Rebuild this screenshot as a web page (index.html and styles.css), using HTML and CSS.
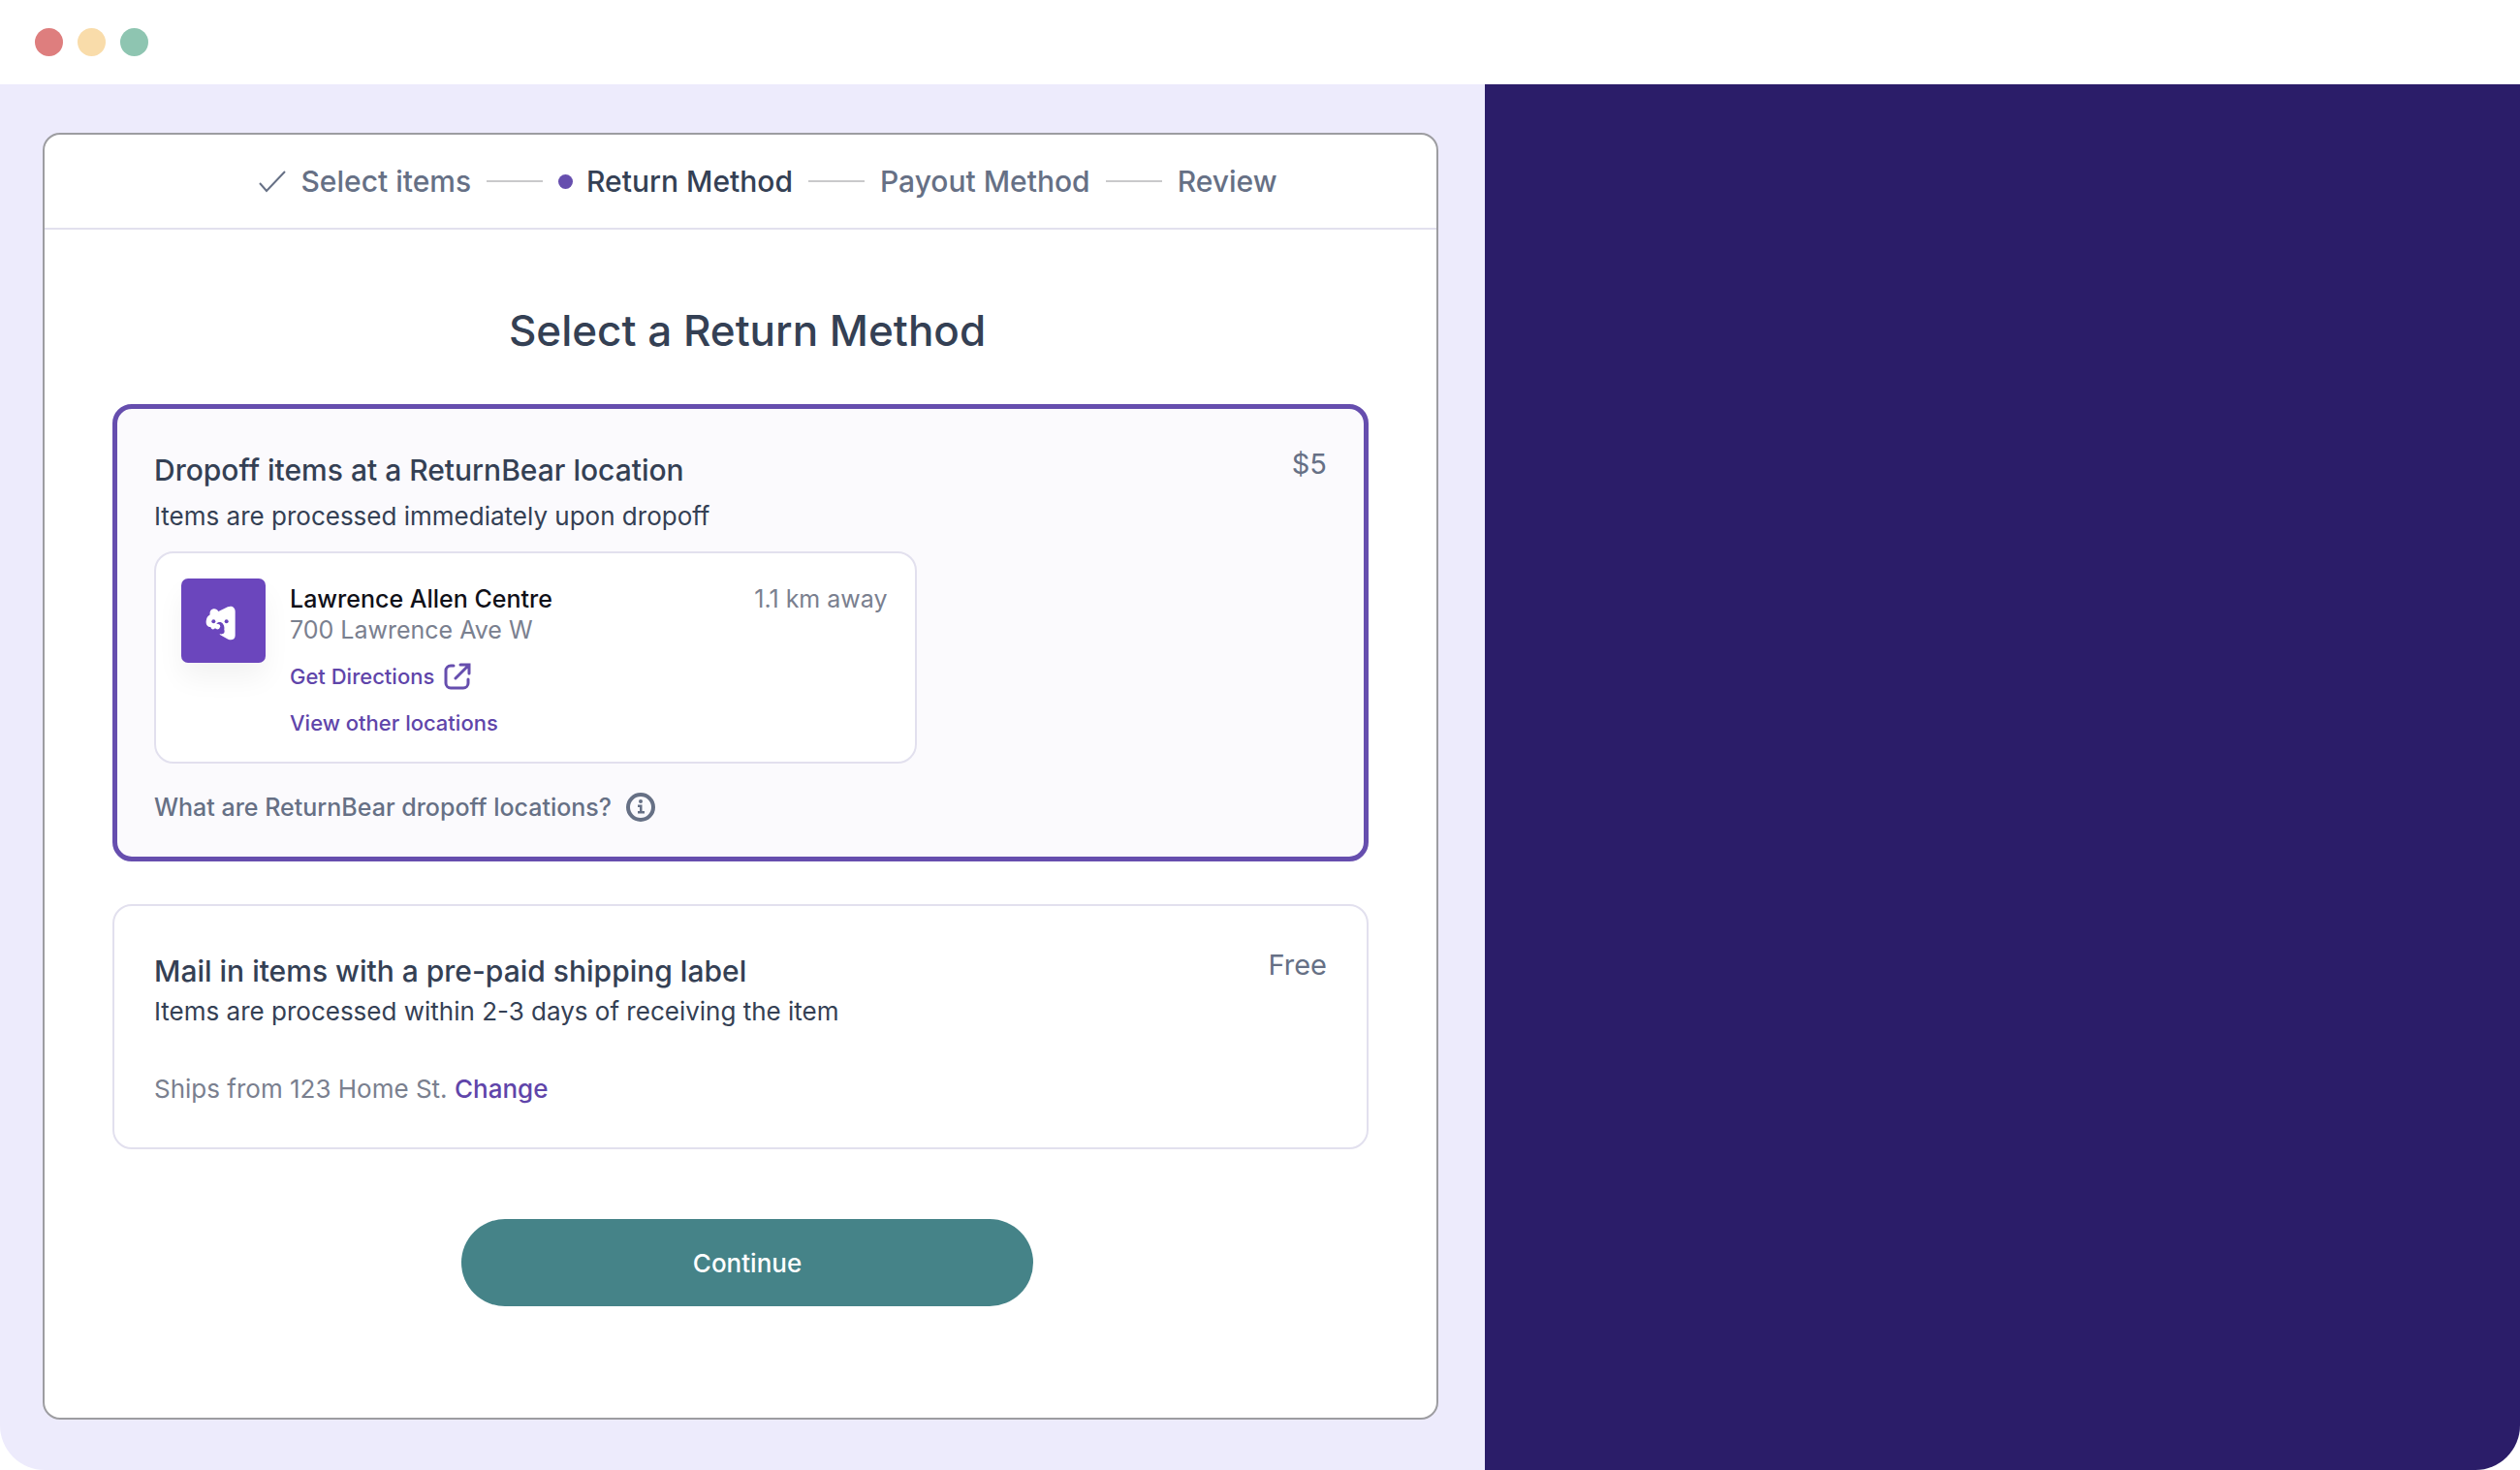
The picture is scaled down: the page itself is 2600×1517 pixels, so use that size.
FILE: index.html
```html
<!DOCTYPE html>
<html lang="en">
<head>
  <meta charset="UTF-8">
  <meta name="viewport" content="width=device-width, initial-scale=1">
  <title>Select a Return Method</title>
  <link rel="stylesheet" href="styles.css">
</head>
<body>

  <div class="window">
    <div class="title-bar">
      <span class="light light-red"></span>
      <span class="light light-yellow"></span>
      <span class="light light-green"></span>
    </div>

    <div class="panes">
      <div class="main-pane">
        <main class="card">

          <ol class="steps">
            <li class="step">
              <svg class="check" viewBox="0 0 30 24" aria-hidden="true">
                <path d="M2 14l7 8L28 2" />
              </svg>
              Select items
            </li>
            <li class="step current" aria-current="step"><span class="dot"></span>Return Method</li>
            <li class="step">Payout Method</li>
            <li class="step">Review</li>
          </ol>

          <div class="content">
            <h1>Select a Return Method</h1>

            <section class="option selected">
              <div class="option-header">
                <h2>Dropoff items at a ReturnBear location</h2>
                <span class="price">$5</span>
              </div>
              <p class="option-text">Items are processed immediately upon dropoff</p>

              <div class="location">
                <div class="location-logo">
                  <svg viewBox="0 0 138 132" aria-hidden="true">
                    <path fill="#fff" d="M26 46C24 34 31 28 39 28c6 0 10 3 13 8l29-14c12-5 23 1 23 14v74c0 12-11 17-22 12l-24-13c-3-2-3-3 0-3 10 1 15-4 12-12l-4-8c-3-5-6-6-9-3-1 8-9 11-15 5-5 6-13 3-14-4-9 1-15-7-14-18 1-10 5-16 12-20z" />
                    <circle fill="#6b46bd" cx="37" cy="67" r="6" />
                    <circle fill="#6b46bd" cx="77" cy="67" r="6" />
                    <path fill="#6b46bd" d="M46 74c4-7 16-7 20 0 6 8 5 18 2 26-2-10-5-15-11-19 2-4-3-7-11-7z" />
                  </svg>
                </div>
                <div class="location-info">
                  <div class="location-row">
                    <h3>Lawrence Allen Centre</h3>
                    <span class="distance">1.1 km away</span>
                  </div>
                  <p class="address">700 Lawrence Ave W</p>
                  <a class="link" href="#directions">
                    Get Directions
                    <svg class="external" viewBox="0 0 28 28" aria-hidden="true">
                      <path d="M10 3H7a5 5 0 0 0-5 5v13a5 5 0 0 0 5 5h13a5 5 0 0 0 5-5v-4M12 16L26 2M17 2h9v9" />
                    </svg>
                  </a>
                  <a class="link" href="#locations">View other locations</a>
                </div>
              </div>

              <p class="help">
                What are ReturnBear dropoff locations?
                <button class="info" type="button" aria-label="About dropoff locations">
                  <svg viewBox="0 0 30 30" aria-hidden="true">
                    <circle class="ring" cx="15" cy="15" r="13" />
                    <circle cx="15" cy="9" r="2" />
                    <path d="M12 12.500h4.500v6.500H19v2.500h-7V19h2v-4h-2z" />
                  </svg>
                </button>
              </p>
            </section>

            <section class="option">
              <div class="option-header">
                <h2>Mail in items with a pre-paid shipping label</h2>
                <span class="price">Free</span>
              </div>
              <p class="option-text">Items are processed within 2-3 days of receiving the item</p>
              <p class="ships">Ships from 123 Home St. <a href="#change">Change</a></p>
            </section>

            <button class="continue" type="button">Continue</button>
          </div>

        </main>
      </div>
      <aside class="side-pane"></aside>
    </div>
  </div>

</body>
</html>
```

FILE: styles.css
```css
* {
  box-sizing: border-box;
}

body {
  margin: 0;
  background: #fff;
  color: #344054;
  font-family: Inter, sans-serif;
  font-size: 25px;
  line-height: 36px;
}

h1, h2, h3, p, ol {
  margin: 0;
  padding: 0;
}

a {
  color: #5f45aa;
  text-decoration: none;
}

svg {
  display: block;
}

.window {
  display: flex;
  flex-direction: column;
  min-height: 100vh;
  border-radius: 46px;
  overflow: hidden;
}

.title-bar {
  display: flex;
  align-items: center;
  gap: 15px;
  height: 87px;
  padding: 0 36px;
}

.light {
  width: 29px;
  height: 29px;
  border-radius: 50%;
}

.light-red {
  background: #de7e7e;
}

.light-yellow {
  background: #f9dcaa;
}

.light-green {
  background: #8ec5b1;
}

.panes {
  flex: 1;
  display: grid;
  grid-template-columns: 1532fr 1068fr;
}

.main-pane {
  display: flex;
  padding: 50px 48px 52px 44px;
  background: #edebfc;
}

.side-pane {
  background: #2b1d69;
}

.card {
  flex: 1;
  border: 2px solid #9d9da1;
  border-radius: 18px;
  background: #fff;
}

/* progress steps */
.steps {
  display: flex;
  align-items: center;
  justify-content: center;
  height: 98px;
  padding-left: 56px;
  border-bottom: 2px solid #e2e0ee;
  list-style: none;
  font-size: 30px;
  font-weight: 500;
  color: #667085;
}

.step {
  display: flex;
  align-items: center;
}

.step + .step::before {
  content: "";
  width: 58px;
  height: 2px;
  margin: 0 16px;
  background: #c9c9cb;
}

.step.current {
  color: #344054;
}

.check {
  width: 30px;
  height: 24px;
  margin-right: 14px;
  fill: none;
  stroke: #667085;
  stroke-width: 2;
}

.dot {
  width: 15px;
  height: 15px;
  margin-right: 14px;
  border-radius: 50%;
  background: #664eae;
}

.content {
  display: flex;
  flex-direction: column;
  padding: 74px 70px;
}

h1,
.continue {
  margin-left: 14px;
}

h1 {
  margin-bottom: 46px;
  font-size: 44px;
  font-weight: 500;
  line-height: 60px;
  text-align: center;
}

/* return options */
.option {
  padding: 47px 41px 42px;
  border: 2px solid #e2e0ee;
  border-radius: 20px;
}

.option + .option {
  margin-top: 44px;
}

.option.selected {
  padding: 43px 38px 33px;
  border: 5px solid #664eae;
  background: #fbfafd;
}

.option-header {
  display: flex;
  justify-content: space-between;
}

h2 {
  font-size: 30px;
  font-weight: 500;
  line-height: 40px;
}

.price {
  font-size: 29px;
  line-height: 28px;
  color: #667085;
}

.option-text {
  margin-top: 4px;
  font-size: 26px;
}

.selected .option-text {
  margin-top: 10px;
}

.location {
  display: flex;
  gap: 25px;
  width: 65%;
  margin-top: 18px;
  padding: 26px 28px 24px 26px;
  border: 2px solid #e2e0ee;
  border-radius: 20px;
  background: #fff;
}

.location-logo {
  display: flex;
  align-items: center;
  justify-content: center;
  flex: none;
  width: 87px;
  height: 87px;
  border-radius: 7px;
  background: #6b46bd;
  box-shadow: 0 16px 28px rgba(0, 0, 0, 0.05);
}

.location-logo svg {
  width: 46px;
  height: 44px;
}

.location-info {
  flex: 1;
  display: flex;
  flex-direction: column;
  align-items: flex-start;
  padding-top: 5px;
  line-height: 32px;
}

.location-row {
  display: flex;
  justify-content: space-between;
  width: 100%;
}

h3 {
  font-size: 25px;
  font-weight: 500;
  color: #101018;
}

.distance,
.address {
  color: #7a808f;
}

.link {
  display: flex;
  align-items: center;
  gap: 10px;
  margin-top: 16px;
  font-size: 22px;
  font-weight: 500;
}

.external {
  width: 28px;
  height: 28px;
  fill: none;
  stroke: #664eae;
  stroke-width: 3;
  stroke-linecap: round;
}

.help {
  display: flex;
  align-items: center;
  gap: 15px;
  margin-top: 27px;
  font-weight: 500;
  color: #667085;
}

.info {
  padding: 0;
  border: 0;
  background: none;
  cursor: pointer;
}

.info svg {
  width: 30px;
  height: 30px;
  fill: #667085;
}

.info .ring {
  fill: none;
  stroke: #667085;
  stroke-width: 4;
}

.ships {
  margin-top: 44px;
  font-size: 26px;
  color: #7a808f;
}

.ships a {
  font-weight: 500;
}

.continue {
  align-self: center;
  width: 590px;
  max-width: 100%;
  height: 90px;
  margin-top: 72px;
  border: 0;
  border-radius: 45px;
  background: #458388;
  color: #fff;
  font-family: inherit;
  font-size: 26px;
  font-weight: 500;
  cursor: pointer;
}
```
